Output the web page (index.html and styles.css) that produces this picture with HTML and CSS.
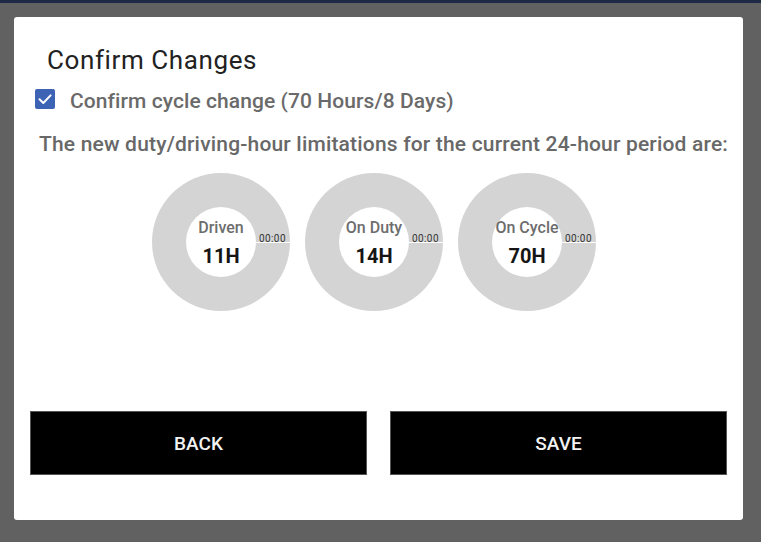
FILE: index.html
```html
<!DOCTYPE html>
<html>
<head>
<meta charset="utf-8">
<link rel="stylesheet" href="styles.css">
</head>
<body>
<div class="topbar"></div>
<div class="stage">
  <div class="dialog">
    <h1 class="title">Confirm Changes</h1>
    <label class="check-row">
      <span class="checkbox">
        <svg viewBox="0 0 20 20" width="20" height="20"><path d="M4.5 10.3 L8.3 14 L15.6 6.4" fill="none" stroke="#fff" stroke-width="2" stroke-linecap="round" stroke-linejoin="round"/></svg>
      </span>
      <span class="check-text">Confirm cycle change (70 Hours/8 Days)</span>
    </label>
    <p class="desc">The new duty/driving-hour limitations for the current 24-hour period are:</p>
    <div class="charts">
      <div class="donut">
        <div class="hole"><span class="lbl">Driven</span><span class="val">11H</span></div>
        <span class="tick"></span><span class="time">00:00</span>
      </div>
      <div class="donut">
        <div class="hole"><span class="lbl">On Duty</span><span class="val">14H</span></div>
        <span class="tick"></span><span class="time">00:00</span>
      </div>
      <div class="donut">
        <div class="hole"><span class="lbl">On Cycle</span><span class="val">70H</span></div>
        <span class="tick"></span><span class="time">00:00</span>
      </div>
    </div>
    <div class="actions">
      <button class="btn">BACK</button>
      <button class="btn">SAVE</button>
    </div>
  </div>
</div>
</body>
</html>
```
FILE: styles.css
```css
html, body {
  margin: 0;
  padding: 0;
}
body {
  background: #616161;
  width: 761px;
  height: 542px;
  overflow: hidden;
  font-family: Roboto, "Liberation Sans", sans-serif;
}
.topbar {
  height: 3px;
  background: #1d2945;
}
.stage {
  padding: 14px 0 0 14px;
}
.dialog {
  width: 729px;
  height: 503px;
  box-sizing: border-box;
  background: #fff;
  border-radius: 3px;
  padding: 28px 16px 45px 16px;
  display: flex;
  flex-direction: column;
}
.title {
  margin: 0 0 0 17px;
  font-size: 26px;
  line-height: 30px;
  font-weight: 400;
  letter-spacing: 0.6px;
  color: #222;
}
.check-row {
  margin: 14px 0 0 5px;
  height: 24px;
  display: flex;
  align-items: flex-start;
  gap: 15px;
}
.checkbox {
  width: 20px;
  height: 20px;
  border-radius: 2px;
  background: #3d63b4;
  display: flex;
}
.check-text {
  font-size: 21px;
  line-height: 24px;
  font-weight: 500;
  letter-spacing: 0.08px;
  color: #6a6a6a;
}
.desc {
  margin: 19px 0 0 9px;
  font-size: 21px;
  line-height: 24px;
  font-weight: 500;
  letter-spacing: 0.18px;
  color: #686868;
  white-space: nowrap;
}
.charts {
  margin: 17px 0 0 122px;
  display: flex;
  gap: 15px;
}
.donut {
  position: relative;
  width: 138px;
  height: 138px;
  border-radius: 50%;
  background: #d4d4d4;
  display: flex;
  align-items: center;
  justify-content: center;
}
.hole {
  width: 70px;
  height: 70px;
  box-sizing: border-box;
  padding-top: 2px;
  border-radius: 50%;
  background: #fff;
  display: flex;
  flex-direction: column;
  align-items: center;
  justify-content: center;
  white-space: nowrap;
}
.lbl {
  font-size: 16px;
  line-height: 18px;
  font-weight: 500;
  color: #6d6d6d;
}
.val {
  font-size: 20px;
  line-height: 22px;
  font-weight: 700;
  color: #151515;
  margin-top: 8px;
}
.tick {
  position: absolute;
  left: 104px;
  right: 0;
  top: 69px;
  height: 1px;
  background: #fff;
}
.time {
  position: absolute;
  left: 107px;
  top: 61px;
  font-size: 10px;
  line-height: 10px;
  color: #333;
  letter-spacing: 0.4px;
}
.actions {
  margin-top: auto;
  display: flex;
  gap: 23px;
}
.btn {
  flex: 1;
  height: 64px;
  background: #000;
  border: 1px solid #555;
  color: #f2f2f2;
  font-family: Roboto, "Liberation Sans", sans-serif;
  font-size: 19px;
  font-weight: 500;
  padding: 0;
}
```
